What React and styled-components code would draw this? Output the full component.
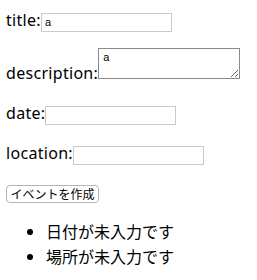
import styled, { createGlobalStyle } from "styled-components";

const Global = createGlobalStyle`
    body{
        margin: 0;
        background-color: #FFFFFF;
        font-family: "Noto Sans", "Noto Sans CJK JP", sans-serif;
        color: #000000;
    }
`

export default function App(){
    return (
        <Page>
            <Global />
            <Row>
                title:<TextInput type="text" defaultValue="a" />
            </Row>
            <Row>
                description:<TextArea defaultValue="a" />
            </Row>
            <Row>
                date:<TextInput type="text" defaultValue="" />
            </Row>
            <Row>
                location:<TextInput type="text" defaultValue="" />
            </Row>
            <ButtonRow>
                <CreateButton>イベントを作成</CreateButton>
            </ButtonRow>
            <Errors>
                <li>日付が未入力です</li>
                <li>場所が未入力です</li>
            </Errors>
        </Page>
    );
}

const Page = styled.div`
    padding: 8px 0 0 6px;
    font-size: 16px;
    line-height: 24px;
`

const Row = styled.div`
    margin-bottom: 16px;
    white-space: nowrap;
    letter-spacing: 0.3px;
`

const TextInput = styled.input`
    box-sizing: border-box;
    width: 131px;
    height: 19px;
    margin: 0;
    padding: 0 3px;
    border: 1px solid #cacaca;
    border-radius: 0;
    font-family: "Liberation Sans", sans-serif;
    font-size: 11px;
    letter-spacing: 0;
    color: #000000;
    outline: none;
`

const TextArea = styled.textarea`
    box-sizing: border-box;
    width: 142px;
    height: 31px;
    margin: 0;
    padding: 2px 4px;
    border: 1px solid #8a8a8a;
    font-family: "Liberation Sans", sans-serif;
    font-size: 11px;
    line-height: 13px;
    letter-spacing: 0;
    color: #000000;
    outline: none;
    vertical-align: baseline;
`

const ButtonRow = styled.div`
    margin-bottom: 14px;
`

const CreateButton = styled.button`
    box-sizing: border-box;
    width: 93px;
    height: 18px;
    padding: 0;
    border: 1px solid #b4b4b4;
    border-radius: 4px;
    background-color: #FFFFFF;
    font-family: "Noto Sans CJK JP", sans-serif;
    font-size: 12px;
    line-height: 16px;
    color: #000000;
`

const Errors = styled.ul`
    margin: 0;
    padding-left: 40px;
    line-height: 25px;
    li{
        font-family: "Noto Sans CJK JP", sans-serif;
        font-size: 16px;
    }
`
